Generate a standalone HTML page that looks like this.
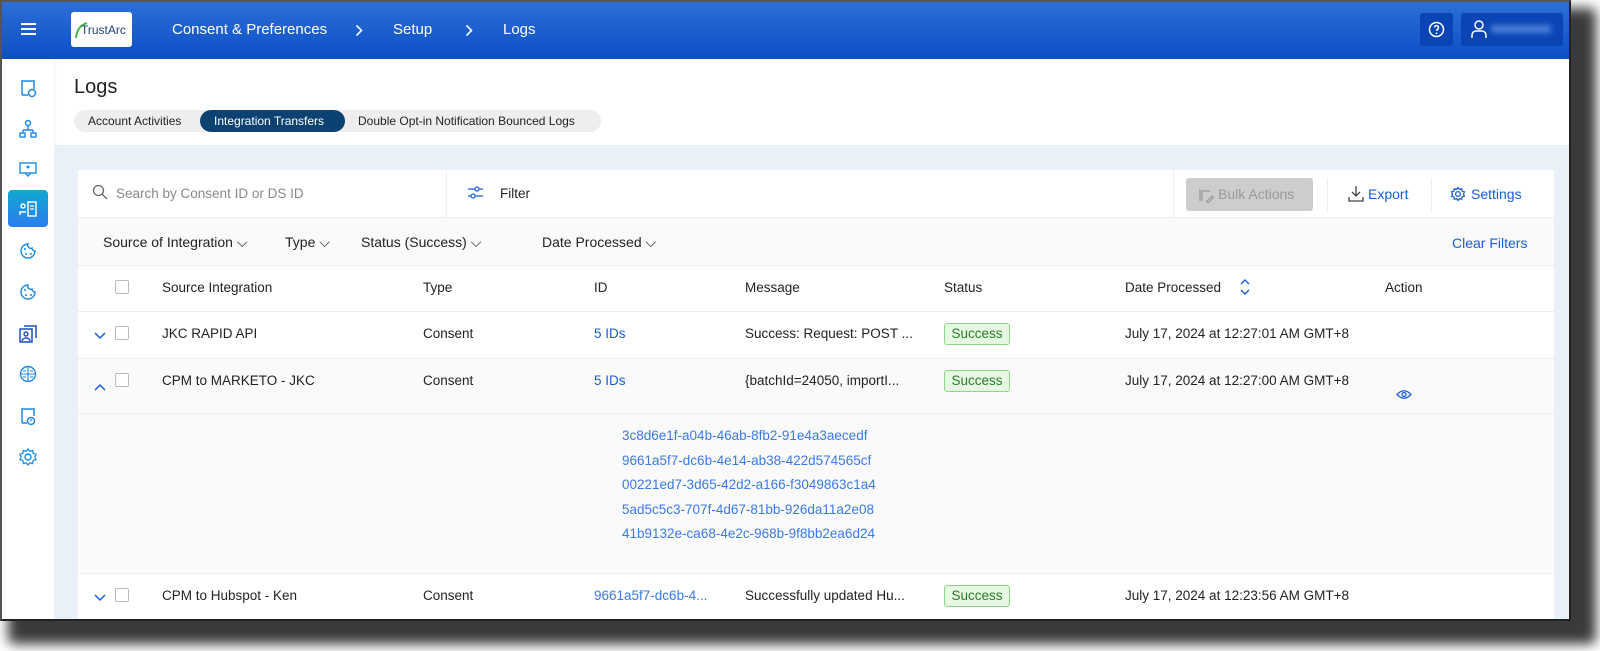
<!DOCTYPE html>
<html><head><meta charset="utf-8"><style>
*{box-sizing:border-box;margin:0;padding:0}
body{width:1600px;height:651px;background:#fff;position:relative;overflow:hidden;font-family:"Liberation Sans",sans-serif;color:#222;font-size:13.5px}
.a{position:absolute;white-space:nowrap}
#shadow{position:absolute;left:8px;top:8px;width:1588px;height:636px;background:#3a3a3a;filter:blur(6px);border-radius:6px}
#win{position:absolute;left:0;top:0;width:1571px;height:621px;background:#fff;border:2px solid #555;border-right-color:#222;border-bottom-color:#222;overflow:hidden}
#hdr{position:absolute;left:0;top:0;width:100%;height:57px;background:linear-gradient(#2b6fd6,#0d4fc7)}
#side{position:absolute;left:0;top:57px;width:52px;height:600px;background:#fff;box-shadow:1px 0 3px rgba(0,0,0,.06)}
.ic{position:absolute;left:16px;width:20px;height:20px}
.row{position:absolute;left:76px;width:1476px;border-bottom:1px solid #eee;background:#fff}
.cb{position:absolute;left:37px;width:14px;height:14px;border:1px solid #bbb;border-radius:2px;background:#fff}
.lnk{color:#1a5ed6}
.badge{position:absolute;left:866px;width:66px;height:22px;border:1px solid #8fd68a;background:#e6f8e2;color:#2a7a2a;border-radius:3px;font-size:13.5px;text-align:center;line-height:20px}
.chev{position:absolute;left:16px;width:12px;height:8px}
</style></head><body>
<div id="shadow"></div>
<div id="win">
 <div id="hdr">
  <div class="a" style="left:19px;top:21px;width:15px;height:2px;background:#fff;box-shadow:0 5px 0 #fff,0 10px 0 #fff"></div>
  <div class="a" style="left:69px;top:10px;width:61px;height:35px;background:#fff;border-radius:3px">
   <svg class="a" style="left:3px;top:9px" width="14" height="18" viewBox="0 0 14 18"><path d="M2 17 Q3 5 13 2" stroke="#4bb84b" stroke-width="2" fill="none"/></svg>
   <span class="a" style="left:10px;top:11px;font-size:12px;color:#1d3f75">TrustArc</span></div>
  <span class="a" style="left:170px;top:19px;color:#fff;font-size:15px">Consent &amp; Preferences</span>
  <svg class="a" style="left:353px;top:22px" width="8" height="13" viewBox="0 0 8 13"><path d="M1.5 1.5l5 5-5 5" stroke="#fff" stroke-width="1.6" fill="none"/></svg>
  <span class="a" style="left:391px;top:19px;color:#fff;font-size:15px">Setup</span>
  <svg class="a" style="left:463px;top:22px" width="8" height="13" viewBox="0 0 8 13"><path d="M1.5 1.5l5 5-5 5" stroke="#fff" stroke-width="1.6" fill="none"/></svg>
  <span class="a" style="left:501px;top:19px;color:#fff;font-size:15px">Logs</span>
  <div class="a" style="left:1418px;top:11px;width:33px;height:33px;background:#0a45b5;border-radius:3px">
   <svg class="a" style="left:8px;top:8px" width="17" height="17" viewBox="0 0 17 17"><circle cx="8.5" cy="8.5" r="7" stroke="#fff" stroke-width="1.5" fill="none"/><path d="M6.5 6.5a2 2 0 1 1 2.5 2v1.5" stroke="#fff" stroke-width="1.5" fill="none"/><circle cx="8.5" cy="12.3" r=".9" fill="#fff"/></svg></div>
  <div class="a" style="left:1459px;top:11px;width:102px;height:33px;background:#0a45b5;border-radius:3px">
   <svg class="a" style="left:10px;top:7px" width="16" height="19" viewBox="0 0 16 19"><circle cx="8" cy="5" r="4" stroke="#fff" stroke-width="1.5" fill="none"/><path d="M1 18v-3a4 4 0 0 1 4-4h6a4 4 0 0 1 4 4v3" stroke="#fff" stroke-width="1.5" fill="none"/></svg>
   <div class="a" style="left:30px;top:12px;width:60px;height:8px;background:#4d7fd8;filter:blur(3px)"></div></div>
 </div>
 <div id="side">
  <svg class="ic" style="top:19px" viewBox="0 0 20 20"><path d="M4 17V3h12v8M4 17h6" stroke="#1e88e5" stroke-width="1.5" fill="none"/><circle cx="14" cy="15" r="3.5" stroke="#1e88e5" stroke-width="1.5" fill="none"/></svg>
  <svg class="ic" style="top:60px" viewBox="0 0 20 20"><circle cx="10" cy="4" r="2.5" stroke="#1e88e5" stroke-width="1.4" fill="none"/><path d="M10 7v4M5 11h10M5 11v3M15 11v3" stroke="#1e88e5" stroke-width="1.4" fill="none"/><rect x="2" y="14" width="5" height="4" stroke="#1e88e5" stroke-width="1.4" fill="none"/><rect x="13" y="14" width="5" height="4" stroke="#1e88e5" stroke-width="1.4" fill="none"/></svg>
  <svg class="ic" style="top:100px" viewBox="0 0 20 20"><rect x="2" y="4" width="16" height="10" stroke="#1e88e5" stroke-width="1.4" fill="none"/><path d="M7 14l3 3 3-3" stroke="#1e88e5" stroke-width="1.4" fill="none"/><circle cx="10" cy="8" r="1.5" fill="#1e88e5"/></svg>
  <div class="a" style="left:6px;top:131px;width:40px;height:37px;border-radius:4px;background:linear-gradient(#10a8d0,#2a7df0)">
   <svg class="a" style="left:10px;top:9px" width="20" height="20" viewBox="0 0 20 20"><circle cx="5" cy="7" r="2" stroke="#fff" stroke-width="1.4" fill="none"/><path d="M2 16v-3h6" stroke="#fff" stroke-width="1.4" fill="none"/><rect x="10" y="3" width="8" height="14" stroke="#fff" stroke-width="1.4" fill="none"/><path d="M12 7h4M12 10h4" stroke="#fff" stroke-width="1.2"/></svg></div>
  <svg class="ic" style="top:182px" viewBox="0 0 20 20"><path d="M17 10a7 7 0 1 1-7-7 3 3 0 0 0 4 4 3 3 0 0 0 3 3z" stroke="#1e88e5" stroke-width="1.4" fill="none"/><circle cx="7" cy="8" r="1" fill="#1e88e5"/><circle cx="8" cy="13" r="1" fill="#1e88e5"/><circle cx="13" cy="13" r="1" fill="#1e88e5"/></svg>
  <svg class="ic" style="top:223px" viewBox="0 0 20 20"><path d="M17 10a7 7 0 1 1-7-7 3 3 0 0 0 4 4 3 3 0 0 0 3 3z" stroke="#1e88e5" stroke-width="1.4" fill="none"/><circle cx="7" cy="8" r="1" fill="#1e88e5"/><circle cx="8" cy="13" r="1" fill="#1e88e5"/><circle cx="13" cy="13" r="1" fill="#1e88e5"/></svg>
  <svg class="ic" style="top:265px" viewBox="0 0 20 20"><rect x="2" y="5" width="12" height="13" stroke="#1a4fc0" stroke-width="1.5" fill="none"/><path d="M6 2h12v12" stroke="#1a4fc0" stroke-width="1.5" fill="none"/><circle cx="8" cy="10" r="2" stroke="#1a4fc0" stroke-width="1.4" fill="none"/><path d="M4 17a4 3 0 0 1 8 0" stroke="#1a4fc0" stroke-width="1.4" fill="none"/></svg>
  <svg class="ic" style="top:305px" viewBox="0 0 20 20"><circle cx="10" cy="10" r="7.5" stroke="#1e88e5" stroke-width="1.4" fill="none"/><path d="M10 3v14M5 7h3M12 7h3M5 13h3M12 13h3M3 10h14" stroke="#1e88e5" stroke-width="1.1" fill="none"/></svg>
  <svg class="ic" style="top:347px" viewBox="0 0 20 20"><path d="M4 17V3h12v7M4 17h5" stroke="#1e88e5" stroke-width="1.5" fill="none"/><circle cx="13" cy="15" r="3.5" stroke="#1e88e5" stroke-width="1.5" fill="none"/><path d="M13 13v2.2" stroke="#1e88e5" stroke-width="1.3"/></svg>
  <svg class="ic" style="top:388px" viewBox="0 0 20 20"><circle cx="10" cy="10" r="3" stroke="#1e88e5" stroke-width="1.4" fill="none"/><path d="M10 2l1.8 2.3 2.8-.8.6 2.9 2.8 1-1.2 2.6 1.2 2.6-2.8 1-.6 2.9-2.8-.8L10 18l-1.8-2.3-2.8.8-.6-2.9-2.8-1L3.2 10 2 7.4l2.8-1 .6-2.9 2.8.8z" stroke="#1e88e5" stroke-width="1.3" fill="none"/></svg>
 </div>
 <span class="a" style="left:72px;top:74px;font-size:20px;color:#222">Logs</span>
 <div class="a" style="left:72px;top:108px;width:527px;height:22px;background:#eee;border-radius:11px"></div>
 <div class="a" style="left:198px;top:108px;width:145px;height:22px;background:#0b4272;border-radius:11px"></div>
 <span class="a" style="left:86px;top:112px;font-size:12px">Account Activities</span>
 <span class="a" style="left:212px;top:112px;font-size:12px;color:#fff">Integration Transfers</span>
 <span class="a" style="left:356px;top:112px;font-size:12px">Double Opt-in Notification Bounced Logs</span>
 <div class="a" style="left:52px;top:143px;width:1520px;height:480px;background:#eaf0f8"></div>
 <div class="a" style="left:76px;top:168px;width:1476px;height:48px;background:#fff;border-bottom:1px solid #eee"></div>
 <svg class="a" style="left:90px;top:182px" width="16" height="16" viewBox="0 0 16 16"><circle cx="6.5" cy="6.5" r="5" stroke="#666" stroke-width="1.3" fill="none"/><path d="M10.2 10.2L15 15" stroke="#666" stroke-width="1.3"/></svg>
 <span class="a" style="left:114px;top:184px;color:#888;font-size:13.5px">Search by Consent ID or DS ID</span>
 <div class="a" style="left:444px;top:168px;width:1px;height:48px;background:#eee"></div>
 <svg class="a" style="left:466px;top:184px" width="15" height="14" viewBox="0 0 15 14"><path d="M0 3h15M0 10h15" stroke="#1a5ed6" stroke-width="1.3"/><circle cx="9" cy="3" r="2" fill="#fff" stroke="#1a5ed6" stroke-width="1.2"/><circle cx="5" cy="10" r="2" fill="#fff" stroke="#1a5ed6" stroke-width="1.2"/></svg>
 <span class="a" style="left:498px;top:184px">Filter</span>
 <div class="a" style="left:1171px;top:168px;width:1px;height:48px;background:#eee"></div>
 <div class="a" style="left:1184px;top:176px;width:127px;height:33px;background:#cdcdcd;border-radius:3px"></div>
 <svg class="a" style="left:1196px;top:185px" width="16" height="16" viewBox="0 0 16 16"><path d="M4 14V4h8M2 2v12" stroke="#999" stroke-width="1.3" fill="none"/><path d="M9 14l5-5 1.5 1.5-5 5H9z" stroke="#999" stroke-width="1.2" fill="none"/></svg>
 <span class="a" style="left:1216px;top:184px;color:#999;font-size:14px">Bulk Actions</span>
 <div class="a" style="left:1325px;top:176px;width:1px;height:34px;background:#eee"></div>
 <svg class="a" style="left:1346px;top:183px" width="16" height="17" viewBox="0 0 16 17"><path d="M8 1v10M4 7l4 4 4-4M1 12v4h14v-4" stroke="#444" stroke-width="1.3" fill="none"/></svg>
 <span class="a lnk" style="left:1366px;top:184px;font-size:14px">Export</span>
 <div class="a" style="left:1429px;top:176px;width:1px;height:34px;background:#eee"></div>
 <svg class="a" style="left:1448px;top:184px" width="16" height="16" viewBox="0 0 20 20"><circle cx="10" cy="10" r="3" stroke="#1a5ed6" stroke-width="1.6" fill="none"/><path d="M10 2l1.8 2.3 2.8-.8.6 2.9 2.8 1-1.2 2.6 1.2 2.6-2.8 1-.6 2.9-2.8-.8L10 18l-1.8-2.3-2.8.8-.6-2.9-2.8-1L3.2 10 2 7.4l2.8-1 .6-2.9 2.8.8z" stroke="#1a5ed6" stroke-width="1.6" fill="none"/></svg>
 <span class="a lnk" style="left:1469px;top:184px;font-size:14px">Settings</span>
 <div class="a" style="left:76px;top:216px;width:1476px;height:48px;background:#fafafa;border-bottom:1px solid #eee"></div>
 <span class="a" style="left:101px;top:232px;font-size:14px">Source of Integration &#x2335;</span>
 <span class="a" style="left:283px;top:232px;font-size:14px">Type &#x2335;</span>
 <span class="a" style="left:359px;top:232px;font-size:14px">Status (Success) &#x2335;</span>
 <span class="a" style="left:540px;top:232px;font-size:14px">Date Processed &#x2335;</span>
 <span class="a lnk" style="left:1450px;top:233px;font-size:14px">Clear Filters</span>
 <div class="row" style="top:264px;height:46px">
  <div class="cb" style="top:14px"></div>
  <span class="a" style="left:84px;top:14px">Source Integration</span>
  <span class="a" style="left:345px;top:14px">Type</span>
  <span class="a" style="left:516px;top:14px">ID</span>
  <span class="a" style="left:667px;top:14px">Message</span>
  <span class="a" style="left:866px;top:14px">Status</span>
  <span class="a" style="left:1047px;top:14px">Date Processed</span>
  <svg class="a" style="left:1162px;top:12px" width="10" height="18" viewBox="0 0 10 18"><path d="M1 6l4-4 4 4M1 12l4 4 4-4" stroke="#1a5ed6" stroke-width="1.4" fill="none"/></svg>
  <span class="a" style="left:1307px;top:14px">Action</span>
 </div>
 <div class="row" style="top:310px;height:47px">
  <svg class="chev" style="top:20px" viewBox="0 0 12 8"><path d="M1 1l5 5 5-5" stroke="#1a5ed6" stroke-width="1.5" fill="none"/></svg>
  <div class="cb" style="top:14px"></div>
  <span class="a" style="left:84px;top:14px">JKC RAPID API</span>
  <span class="a" style="left:345px;top:14px">Consent</span>
  <span class="a lnk" style="left:516px;top:14px">5 IDs</span>
  <span class="a" style="left:667px;top:14px">Success: Request: POST ...</span>
  <div class="badge" style="top:11px">Success</div>
  <span class="a" style="left:1047px;top:14px">July 17, 2024 at 12:27:01 AM GMT+8</span>
 </div>
 <div class="row" style="top:357px;height:55px;background:#fafafa">
  <svg class="chev" style="top:24px" viewBox="0 0 12 8"><path d="M1 7l5-5 5 5" stroke="#1a5ed6" stroke-width="1.5" fill="none"/></svg>
  <div class="cb" style="top:14px"></div>
  <span class="a" style="left:84px;top:14px">CPM to MARKETO - JKC</span>
  <span class="a" style="left:345px;top:14px">Consent</span>
  <span class="a lnk" style="left:516px;top:14px">5 IDs</span>
  <span class="a" style="left:667px;top:14px">{batchId=24050, importI...</span>
  <div class="badge" style="top:11px">Success</div>
  <span class="a" style="left:1047px;top:14px">July 17, 2024 at 12:27:00 AM GMT+8</span>
  <svg class="a" style="left:1318px;top:30px" width="16" height="11" viewBox="0 0 16 11"><path d="M1 5.5Q8-2 15 5.5Q8 13 1 5.5z" stroke="#1a5ed6" stroke-width="1.3" fill="none"/><circle cx="8" cy="5.5" r="2" stroke="#1a5ed6" stroke-width="1.3" fill="none"/></svg>
 </div>
 <div class="row" style="top:412px;height:160px;background:#fafafa">
  <div class="a" style="left:544px;top:10px;line-height:24.5px;font-size:13.5px;color:#3a7ae8">3c8d6e1f-a04b-46ab-8fb2-91e4a3aecedf<br>9661a5f7-dc6b-4e14-ab38-422d574565cf<br>00221ed7-3d65-42d2-a166-f3049863c1a4<br>5ad5c5c3-707f-4d67-81bb-926da11a2e08<br>41b9132e-ca68-4e2c-968b-9f8bb2ea6d24</div>
 </div>
 <div class="row" style="top:572px;height:50px">
  <svg class="chev" style="top:20px" viewBox="0 0 12 8"><path d="M1 1l5 5 5-5" stroke="#1a5ed6" stroke-width="1.5" fill="none"/></svg>
  <div class="cb" style="top:14px"></div>
  <span class="a" style="left:84px;top:14px">CPM to Hubspot - Ken</span>
  <span class="a" style="left:345px;top:14px">Consent</span>
  <span class="a" style="left:516px;top:14px;color:#3a7ae8">9661a5f7-dc6b-4...</span>
  <span class="a" style="left:667px;top:14px">Successfully updated Hu...</span>
  <div class="badge" style="top:11px">Success</div>
  <span class="a" style="left:1047px;top:14px">July 17, 2024 at 12:23:56 AM GMT+8</span>
 </div>
</div>
</body></html>
